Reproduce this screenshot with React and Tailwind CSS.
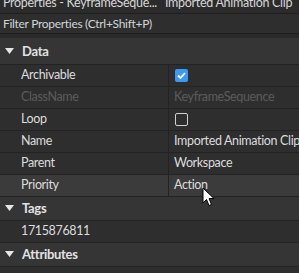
const font = { fontFamily: 'Lato, "Noto Sans", sans-serif' };

function Header({ label, tall }) {
  return (
    <div className={`flex items-center ${tall ? 'h-[27px] pt-[1px]' : 'h-[24px]'} bg-[#353535] border-b border-[#232323]`}>
      <svg width="9" height="7" viewBox="0 0 9 7" className="ml-[5px] mr-[8px]">
        <path d="M0 0 H9 L4.5 6 Z" fill="#e6e6e6" />
      </svg>
      <span className="text-[13px] font-bold text-[#e2e2e2] tracking-[-0.3px]">{label}</span>
    </div>
  );
}

function Row({ label, children, dim, active }) {
  const tone = dim ? 'text-[#5c5c5c]' : 'text-[#dcdcdc]';
  return (
    <div className={`flex h-[22px] border-b border-[#232323] ${active ? 'bg-[#3b3b3b]' : 'bg-[#2e2e2e]'}`}>
      <div className={`w-[168px] pl-[21px] flex items-center text-[12.5px] tracking-[-0.35px] ${tone}`}>{label}</div>
      <div className={`flex-1 border-l border-[#232323] pl-[5px] flex items-center text-[12.5px] tracking-[-0.35px] whitespace-nowrap overflow-hidden ${tone}`}>{children}</div>
    </div>
  );
}

function Checkbox({ checked }) {
  if (checked) {
    return (
      <div className="ml-[1px] w-[13px] h-[13px] rounded-[2px] bg-[#3a9bf0] flex items-center justify-center">
        <svg width="9" height="7" viewBox="0 0 9 7">
          <path d="M1 3.5 L3.5 6 L8 1" stroke="white" strokeWidth="1.8" fill="none" />
        </svg>
      </div>
    );
  }
  return <div className="ml-[1px] w-[13px] h-[13px] rounded-[2px] border border-[#d0d0d0]" />;
}

export default function App() {
  return (
    <div className="w-[299px] h-[273px] overflow-hidden bg-[#2e2e2e] relative" style={font}>
      <div className="h-[13px] bg-[#2b2b2b] overflow-hidden flex text-[12.5px] tracking-[-0.3px] text-[#d6d6d6] whitespace-nowrap">
        <span className="mt-[-6px] ml-[3px]">Properties - KeyframeSeque...</span>
        <span className="mt-[-6px] ml-[8px]">Imported Animation Clip</span>
      </div>
      <div className="h-[21px] border-y border-[#1e1e1e] bg-[#2e2e2e] flex items-center pl-[3px] text-[12px] tracking-[-0.3px] text-[#cfd4d8] whitespace-nowrap">
        Filter Properties (Ctrl+Shift+P)
      </div>
      <div className="h-[4px] bg-[#2a2a2a]" />
      <Header label="Data" tall />
      <Row label="Archivable"><Checkbox checked /></Row>
      <Row label="ClassName" dim>KeyframeSequence</Row>
      <Row label="Loop"><Checkbox /></Row>
      <Row label="Name">Imported Animation Clip</Row>
      <Row label="Parent">Workspace</Row>
      <Row label="Priority" active>Action</Row>
      <Header label="Tags" />
      <div className="h-[22px] border-b border-[#232323] pl-[21px] flex items-center text-[12.5px] tracking-[-0.35px] text-[#dcdcdc]">1715876811</div>
      <Header label="Attributes" />
      <svg width="14" height="21" viewBox="0 0 14 21" className="absolute left-[202px] top-[187px]">
        <path d="M1 1 L1 16 L4.5 12.5 L7 18.5 L9.5 17.5 L7 11.5 L12 11.5 Z" fill="white" stroke="black" strokeWidth="1" />
      </svg>
    </div>
  );
}
